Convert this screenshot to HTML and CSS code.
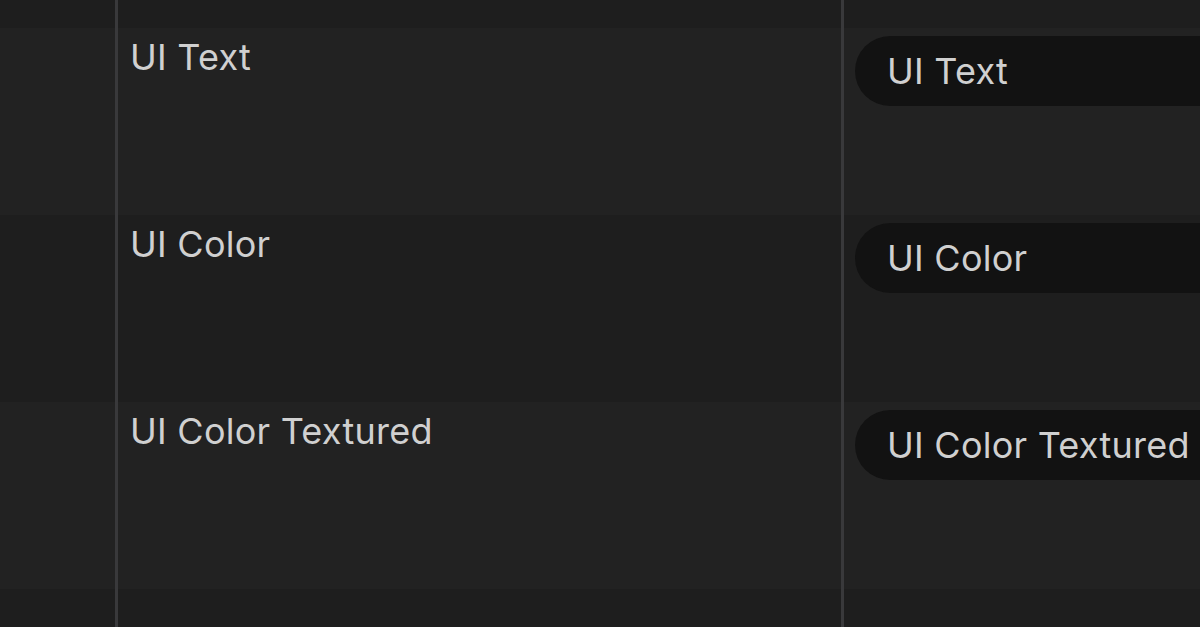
FILE: index.html
```html
<!DOCTYPE html>
<html lang="en">
<head>
<meta charset="utf-8">
<title>UI Materials</title>
<link rel="stylesheet" href="styles.css">
</head>
<body>
<div class="table">
  <div class="row row-dark row-top">
    <div class="cell cell-icon"></div>
    <div class="cell cell-name"></div>
    <div class="cell cell-value"></div>
  </div>
  <div class="row row-light">
    <div class="cell cell-icon"></div>
    <div class="cell cell-name">UI Text</div>
    <div class="cell cell-value"><div class="pill">UI Text</div></div>
  </div>
  <div class="row row-dark">
    <div class="cell cell-icon"></div>
    <div class="cell cell-name">UI Color</div>
    <div class="cell cell-value"><div class="pill">UI Color</div></div>
  </div>
  <div class="row row-light">
    <div class="cell cell-icon"></div>
    <div class="cell cell-name">UI Color Textured</div>
    <div class="cell cell-value"><div class="pill">UI Color Textured</div></div>
  </div>
  <div class="row row-dark row-bottom">
    <div class="cell cell-icon"></div>
    <div class="cell cell-name"></div>
    <div class="cell cell-value"></div>
  </div>
</div>
</body>
</html>
```

FILE: styles.css
```css
html, body {
  margin: 0;
  padding: 0;
  background: #1f1f1f;
  overflow: hidden;
}

body {
  width: 1200px;
  height: 627px;
  font-family: "Inter", "Noto Sans", sans-serif;
  color: #d0d0d0;
}

.table {
  display: flex;
  flex-direction: column;
  height: 627px;
}

.row {
  display: grid;
  grid-template-columns: 115px 726px 1fr;
  height: 187px;
  flex: none;
}

.row-top {
  height: 28px;
}

.row-bottom {
  flex: 1;
}

.row-light {
  background: #222222;
}

.row-dark {
  background: #1e1e1e;
}

.cell-name,
.cell-value {
  border-left: 3px solid #39393b;
  min-width: 0;
}

.cell-name {
  padding: 7px 0 0 12px;
  font-size: 36px;
  line-height: 44px;
  letter-spacing: 0.25px;
  white-space: nowrap;
}

.cell-value {
  padding: 8px 0 0 11px;
  overflow: hidden;
}

.pill {
  height: 70px;
  width: 600px;
  box-sizing: border-box;
  display: flex;
  align-items: center;
  padding-left: 32px;
  border-radius: 35px;
  background: #121212;
  font-size: 36px;
  letter-spacing: 0.25px;
  white-space: nowrap;
}
```
